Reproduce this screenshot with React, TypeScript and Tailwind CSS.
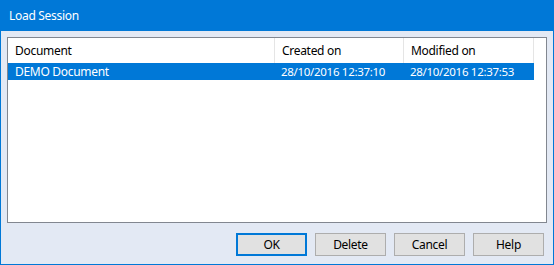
import React from 'react';

const columns = [
  { label: 'Document', width: 'w-[267px]' },
  { label: 'Created on', width: 'w-[129px]' },
  { label: 'Modified on', width: 'w-[130px]' },
];

const rows = [
  { name: 'DEMO Document', created: '28/10/2016 12:37:10', modified: '28/10/2016 12:37:53', selected: true },
];

const buttons = [
  { label: 'OK', primary: true },
  { label: 'Delete' },
  { label: 'Cancel' },
  { label: 'Help' },
];

export default function App() {
  return (
    <div
      className="w-[554px] h-[265px] border border-[#0078d7] bg-[#e3e9f4] flex flex-col text-[12px] text-black tracking-[-0.3px]"
      style={{ fontFamily: '"Noto Sans", "Open Sans", sans-serif' }}
    >
      {/* title bar */}
      <div className="h-[30px] shrink-0 bg-[#0078d7] text-white flex items-center pl-[8px] text-[12px]">
        Load Session
      </div>

      <div className="flex-1 flex flex-col px-[6px] pt-[6px]">
        {/* list view */}
        <div className="h-[186px] border border-[#828790] bg-white overflow-hidden">
          <div className="flex h-[25px]">
            {columns.map((c) => (
              <div
                key={c.label}
                className={`${c.width} shrink-0 border-r border-[#e5e5e5] pl-[7px] flex items-center leading-none`}
              >
                {c.label}
              </div>
            ))}
          </div>
          {rows.map((r) => (
            <div
              key={r.name}
              className={`flex h-[17px] w-[526px] ${r.selected ? 'bg-[#0078d7] text-white' : ''}`}
            >
              <div className="w-[267px] shrink-0 pl-[7px] flex items-center leading-none">{r.name}</div>
              <div className="w-[129px] shrink-0 pl-[6px] flex items-center leading-none text-[11.5px]">{r.created}</div>
              <div className="w-[130px] shrink-0 pl-[6px] flex items-center leading-none text-[11.5px]">{r.modified}</div>
            </div>
          ))}
        </div>

        {/* buttons */}
        <div className="flex justify-end gap-[8px] mt-[10px] pr-[3px]">
          {buttons.map((b) => (
            <button
              key={b.label}
              className={`w-[71px] h-[23px] bg-[#e1e1e1] flex items-center justify-center leading-none ${
                b.primary ? 'border-2 border-[#0078d7]' : 'border border-[#adadad]'
              }`}
            >
              {b.label}
            </button>
          ))}
        </div>
      </div>
    </div>
  );
}
